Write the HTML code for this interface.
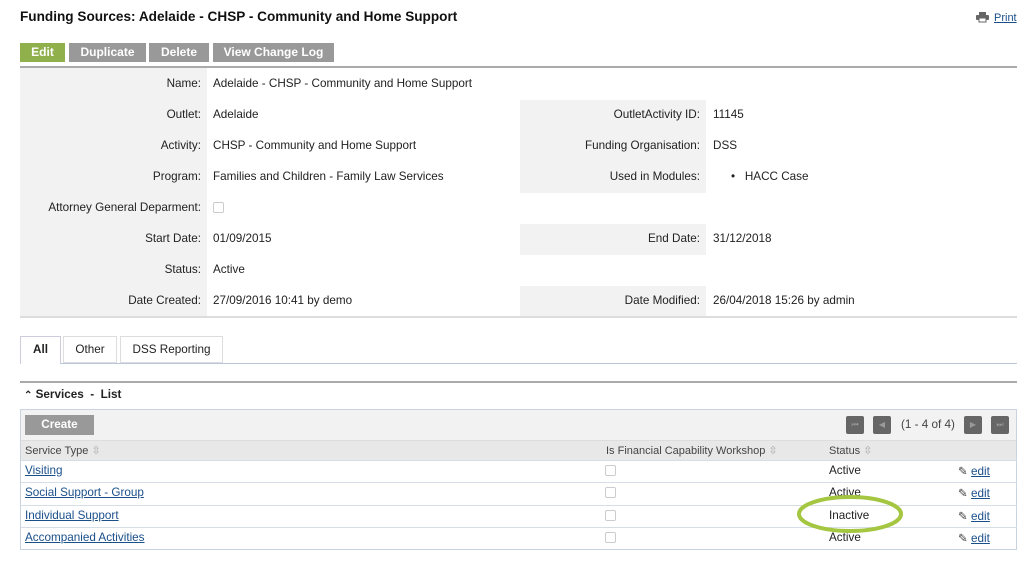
<!DOCTYPE html>
<html><head><style>
*{margin:0;padding:0;box-sizing:border-box}
body{width:1024px;height:563px;background:#fff;font-family:"Liberation Sans",sans-serif;font-size:11.7px;color:#222;position:relative;overflow:hidden}
.a{position:absolute}
h1{position:absolute;left:20px;top:9px;font-size:13.6px;font-weight:bold;color:#111}
.btn{position:absolute;top:43px;height:19px;color:#fff;font-weight:bold;font-size:12px;line-height:19px;text-align:center;background:#999}
.lbl{position:absolute;text-align:right;white-space:nowrap}
.val{position:absolute;white-space:nowrap}
a{color:#1a4f8a;text-decoration:underline}
.cb{position:absolute;width:11px;height:11px;border:1px solid #ccc;border-radius:2px;background:#fff}
.row{position:absolute;left:21px;width:996px;height:22px;border-top:1px solid #d5dde6}
.pg{position:absolute;top:416px;width:18px;height:18px;background:#666;border-radius:2px;color:#999;font-size:8px;text-align:center;line-height:18px}
</style></head><body>
<h1>Funding Sources: Adelaide - CHSP - Community and Home Support</h1>
<svg class="a" style="left:976px;top:12px" width="13" height="11" viewBox="0 0 13 11"><rect x="3" y="0" width="7" height="3" fill="#666"/><rect x="0" y="3" width="13" height="5" rx="1" fill="#666"/><rect x="3" y="6" width="7" height="4" fill="#fff" stroke="#666"/></svg>
<a class="a" style="left:994px;top:12px;font-size:11px">Print</a>
<div class="btn" style="left:20px;width:45px;background:#8fb04a">Edit</div>
<div class="btn" style="left:69px;width:77px">Duplicate</div>
<div class="btn" style="left:149px;width:60px">Delete</div>
<div class="btn" style="left:213px;width:121px">View Change Log</div>
<div class="a" style="left:20px;top:66px;width:997px;height:2px;background:#aaa"></div>
<div class="a" style="left:20px;top:68px;width:187px;height:248px;background:#f2f2f2"></div>
<div class="a" style="left:520px;top:100px;width:186px;height:93px;background:#f2f2f2"></div>
<div class="a" style="left:520px;top:224px;width:186px;height:31px;background:#f2f2f2"></div>
<div class="a" style="left:520px;top:286px;width:186px;height:31px;background:#f2f2f2"></div>
<div class="a" style="left:20px;top:316px;width:997px;height:2px;background:#ddd"></div>
<div class="lbl" style="right:823px;top:77px">Name:</div><div class="val" style="left:213px;top:77px">Adelaide - CHSP - Community and Home Support</div>
<div class="lbl" style="right:823px;top:108px">Outlet:</div><div class="val" style="left:213px;top:108px">Adelaide</div>
<div class="lbl" style="right:823px;top:139px">Activity:</div><div class="val" style="left:213px;top:139px">CHSP - Community and Home Support</div>
<div class="lbl" style="right:823px;top:170px">Program:</div><div class="val" style="left:213px;top:170px">Families and Children - Family Law Services</div>
<div class="lbl" style="right:823px;top:201px">Attorney General Deparment:</div><div class="cb" style="left:213px;top:202px"></div>
<div class="lbl" style="right:823px;top:232px">Start Date:</div><div class="val" style="left:213px;top:232px">01/09/2015</div>
<div class="lbl" style="right:823px;top:263px">Status:</div><div class="val" style="left:213px;top:263px">Active</div>
<div class="lbl" style="right:823px;top:294px">Date Created:</div><div class="val" style="left:213px;top:294px">27/09/2016 10:41 by demo</div>
<div class="lbl" style="right:324px;top:108px">OutletActivity ID:</div><div class="val" style="left:713px;top:108px">11145</div>
<div class="lbl" style="right:324px;top:139px">Funding Organisation:</div><div class="val" style="left:713px;top:139px">DSS</div>
<div class="lbl" style="right:324px;top:170px">Used in Modules:</div><div class="val" style="left:731px;top:170px">•&nbsp;&nbsp;&nbsp;HACC Case</div>
<div class="lbl" style="right:324px;top:232px">End Date:</div><div class="val" style="left:713px;top:232px">31/12/2018</div>
<div class="lbl" style="right:324px;top:294px">Date Modified:</div><div class="val" style="left:713px;top:294px">26/04/2018 15:26 by admin</div>
<div class="a" style="left:20px;top:363px;width:997px;height:1px;background:#b8c8d8"></div>
<div class="a" style="left:20px;top:336px;width:41px;height:28px;border:1px solid #ccd;border-bottom:none;background:#fff;font-weight:bold;text-align:center;line-height:26px">All</div>
<div class="a" style="left:63px;top:336px;width:54px;height:27px;border:1px solid #ddd;background:#fff;text-align:center;line-height:26px">Other</div>
<div class="a" style="left:120px;top:336px;width:103px;height:27px;border:1px solid #ddd;background:#fff;text-align:center;line-height:26px">DSS Reporting</div>
<div class="a" style="left:20px;top:381px;width:997px;height:2px;background:#aaa"></div>
<div class="a" style="left:24px;top:388px;font-weight:bold"><span style="font-size:10px">&#8963;</span> Services&nbsp; -&nbsp; List</div>
<div class="a" style="left:20px;top:409px;width:997px;height:141px;border:1px solid #c8d4e0"></div>
<div class="a" style="left:21px;top:410px;width:995px;height:30px;background:#f2f2f2"></div>
<div class="a" style="left:25px;top:415px;width:69px;height:20px;background:#999;color:#fff;font-weight:bold;text-align:center;line-height:20px">Create</div>
<div class="pg" style="left:846px">⏮</div><div class="pg" style="left:873px">◀</div>
<div class="a" style="left:901px;top:418px;color:#444">(1 - 4 of 4)</div>
<div class="pg" style="left:964px">▶</div><div class="pg" style="left:991px">⏭</div>
<div class="a" style="left:21px;top:440px;width:995px;height:20px;background:#e8e8e8;border-top:1px solid #ddd"></div>
<div class="a" style="left:25px;top:444px;font-size:11px;color:#444">Service Type <span style="color:#aaa">⇳</span></div>
<div class="a" style="left:606px;top:444px;font-size:11px;color:#444">Is Financial Capability Workshop <span style="color:#aaa">⇳</span></div>
<div class="a" style="left:829px;top:444px;font-size:11px;color:#444">Status <span style="color:#aaa">⇳</span></div>
<div class="row" style="top:460px"></div><div class="row" style="top:482px"></div><div class="row" style="top:505px"></div><div class="row" style="top:527px"></div>
<a class="a" style="left:25px;top:464px">Visiting</a>
<a class="a" style="left:25px;top:486px">Social Support - Group</a>
<a class="a" style="left:25px;top:509px">Individual Support</a>
<a class="a" style="left:25px;top:531px">Accompanied Activities</a>
<div class="cb" style="left:605px;top:465px"></div><div class="cb" style="left:605px;top:487px"></div><div class="cb" style="left:605px;top:510px"></div><div class="cb" style="left:605px;top:532px"></div>
<div class="val" style="left:829px;top:464px">Active</div>
<div class="val" style="left:829px;top:486px">Active</div>
<div class="val" style="left:829px;top:509px">Inactive</div>
<div class="val" style="left:829px;top:531px">Active</div>
<div class="val" style="left:958px;top:464px"><span style="color:#444">✎</span> <a>edit</a></div>
<div class="val" style="left:958px;top:486px"><span style="color:#444">✎</span> <a>edit</a></div>
<div class="val" style="left:958px;top:509px"><span style="color:#444">✎</span> <a>edit</a></div>
<div class="val" style="left:958px;top:531px"><span style="color:#444">✎</span> <a>edit</a></div>
<svg class="a" style="left:790px;top:492px" width="120" height="44"><ellipse cx="60" cy="22" rx="51" ry="17" fill="none" stroke="#a4c640" stroke-width="4"/></svg>
</body></html>
